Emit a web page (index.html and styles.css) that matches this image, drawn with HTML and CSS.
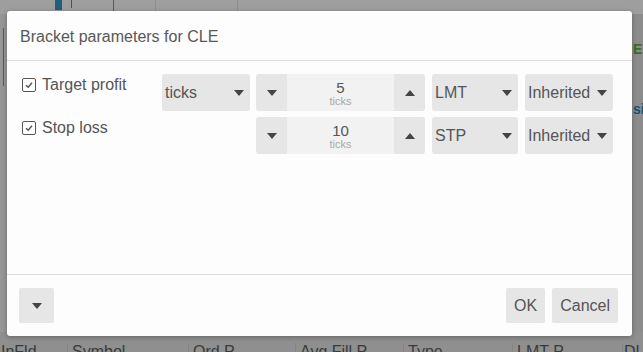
FILE: index.html
```html
<!DOCTYPE html>
<html>
<head>
<meta charset="utf-8">
<link rel="stylesheet" href="styles.css">
</head>
<body>
<div class="app">
  <div class="topstrip">
    <span class="candle"></span><span class="wick"></span><span class="vline blue"></span><span class="vline g1"></span><span class="vline g2"></span>
  </div>
  <div class="middle">
    <div class="leftside"><span class="lline"></span></div>
    <div class="center"></div>
    <div class="rightside"><span class="e">E</span><span class="si">si</span></div>
  </div>
  <div class="colheads">
    <span class="ch w72">InFld</span><span class="ch w121">Symbol</span><span class="ch w107">Ord P</span><span class="ch w108">Avg Fill P</span><span class="ch w109">Type</span><span class="ch w110">LMT P</span><span class="ch">DL</span>
  </div>
</div>

<div class="modal">
  <div class="mhead">Bracket parameters for CLE</div>
  <div class="mbody">
    <div class="grid">
      <label class="chk"><span class="box"><svg viewBox="0 0 10 10" width="10" height="10"><path d="M2 5.2 L4.2 7.3 L8 2.8" fill="none" stroke="#555" stroke-width="1.4"/></svg></span>Target profit</label>
      <div class="sel"><span>ticks</span><svg class="arr" viewBox="0 0 10 6" width="10" height="6"><path d="M0 0 H10 L5 6 Z" fill="#444"/></svg></div>
      <div class="spin">
        <div class="sbtn"><svg viewBox="0 0 10 6" width="10" height="6"><path d="M0 0 H10 L5 6 Z" fill="#444"/></svg></div>
        <div class="sval"><span class="num">5</span><span class="unit">ticks</span></div>
        <div class="sbtn"><svg viewBox="0 0 10 6" width="10" height="6"><path d="M0 6 H10 L5 0 Z" fill="#444"/></svg></div>
      </div>
      <div class="sel otype"><span>LMT</span><svg class="arr" viewBox="0 0 10 6" width="10" height="6"><path d="M0 0 H10 L5 6 Z" fill="#444"/></svg></div>
      <div class="sel"><span>Inherited</span><svg class="arr" viewBox="0 0 10 6" width="10" height="6"><path d="M0 0 H10 L5 6 Z" fill="#444"/></svg></div>

      <label class="chk"><span class="box"><svg viewBox="0 0 10 10" width="10" height="10"><path d="M2 5.2 L4.2 7.3 L8 2.8" fill="none" stroke="#555" stroke-width="1.4"/></svg></span>Stop loss</label>
      <div></div>
      <div class="spin">
        <div class="sbtn"><svg viewBox="0 0 10 6" width="10" height="6"><path d="M0 0 H10 L5 6 Z" fill="#444"/></svg></div>
        <div class="sval"><span class="num">10</span><span class="unit">ticks</span></div>
        <div class="sbtn"><svg viewBox="0 0 10 6" width="10" height="6"><path d="M0 6 H10 L5 0 Z" fill="#444"/></svg></div>
      </div>
      <div class="sel otype"><span>STP</span><svg class="arr" viewBox="0 0 10 6" width="10" height="6"><path d="M0 0 H10 L5 6 Z" fill="#444"/></svg></div>
      <div class="sel"><span>Inherited</span><svg class="arr" viewBox="0 0 10 6" width="10" height="6"><path d="M0 0 H10 L5 6 Z" fill="#444"/></svg></div>
    </div>
  </div>
  <div class="mfoot">
    <div class="fbtn"><svg viewBox="0 0 10 6" width="10" height="6"><path d="M0 0 H10 L5 6 Z" fill="#444"/></svg></div>
    <div class="spacer"></div>
    <div class="btn">OK</div>
    <div class="btn">Cancel</div>
  </div>
</div>
</body>
</html>
```
FILE: styles.css
```css
* { box-sizing: border-box; }
html, body { margin: 0; padding: 0; }
body {
  width: 643px;
  height: 352px;
  overflow: hidden;
  position: relative;
  font-family: "Liberation Sans", Arial, sans-serif;
  background: #9a9a9a;
}
.app {
  width: 643px;
  height: 352px;
  display: flex;
  flex-direction: column;
}
.topstrip {
  height: 14px;
  position: relative;
  background: #9e9e9e;
  display: flex;
}
.candle { position: absolute; left: 55px; top: 0; width: 7px; height: 10px; background: #1f5f80; }
.wick { position: absolute; left: 71px; top: 0; width: 1px; height: 8px; background: #1f5f80; }
.vline { position: absolute; top: 0; width: 1px; height: 14px; }
.vline.blue { left: 113px; background: #2a6a8a; }
.vline.g1 { left: 155px; background: #8e8e8e; }
.vline.g2 { left: 237px; background: #8e8e8e; }
.middle { flex: 1; display: flex; }
.leftside { width: 7px; background: #969696; position: relative; }
.lline { position: absolute; left: 3px; top: 14px; width: 1px; height: 58px; background: #2a6a8a; }
.center { flex: 1; }
.rightside {
  width: 11px;
  margin-left: auto;
  background: #8c8c8c;
  display: flex;
  flex-direction: column;
  font-weight: bold;
  font-size: 14px;
  padding-left: 1px;
  overflow: hidden;
}
.e { color: #3f6a2a; margin-top: 27px; }
.si { color: #1a4f6a; margin-top: 44px; }
.colheads {
  height: 20px;
  background: #8f8f8f;
  display: flex;
  align-items: flex-start;
  font-size: 16px;
  color: #3a3a3a;
  padding-top: 11px;
  overflow: hidden;
}
.ch { flex: none; padding-left: 1px; border-right: 1px solid #848484; height: 30px; }
.w72 { width: 68px; }
.w121 { width: 121px; padding-left: 4px; }
.w107 { width: 107px; padding-left: 4px; }
.w108 { width: 108px; padding-left: 4px; }
.w109 { width: 109px; padding-left: 4px; }
.w110 { width: 110px; padding-left: 4px; }

.modal {
  position: absolute;
  left: 7px;
  top: 11px;
  width: 625px;
  height: 325px;
  background: #fdfdfd;
  border-radius: 3px;
  box-shadow: 0 1px 5px rgba(0,0,0,0.3);
  display: flex;
  flex-direction: column;
  color: #555;
}
.mhead {
  height: 50px;
  border-bottom: 1px solid #dcdcdc;
  font-size: 16px;
  padding: 17px 0 0 13px;
  color: #585858;
}
.mbody {
  flex: 1;
  padding: 13px 0 0 15px;
}
.grid {
  display: grid;
  grid-template-columns: 134px 88px 170px 87px 88px;
  column-gap: 6px;
  row-gap: 6px;
  grid-auto-rows: 37px;
}
.chk {
  display: flex;
  align-items: flex-start;
  font-size: 16px;
  color: #555;
  padding-top: 2px;
}
.box {
  width: 14px;
  height: 14px;
  border: 1.5px solid #555;
  border-radius: 2px;
  margin-top: 2px;
  margin-right: 6px;
  display: flex;
  align-items: center;
  justify-content: center;
  background: #fff;
}
.sel {
  background: #e6e6e6;
  border-radius: 3px;
  display: flex;
  align-items: center;
  padding: 0 6px 0 3px;
  font-size: 16px;
  color: #555;
}
.sel.otype { margin-right: 1px; }
.sel span { flex: 1; }
.sel .arr { flex: none; }
.spin { display: flex; margin-right: 1px; }
.sbtn {
  width: 31px;
  background: #e6e6e6;
  display: flex;
  align-items: center;
  justify-content: center;
}
.spin .sbtn:first-child { border-radius: 3px 0 0 3px; }
.spin .sbtn:last-child { border-radius: 0 3px 3px 0; }
.sval {
  flex: 1;
  background: #f2f2f2;
  display: flex;
  flex-direction: column;
  align-items: center;
  justify-content: center;
  line-height: 1;
}
.num { font-size: 15px; color: #555; margin-top: 2px; }
.unit { font-size: 11px; color: #a8a8a8; margin-top: 1px; }
.mfoot {
  height: 62px;
  border-top: 1px solid #dcdcdc;
  display: flex;
  align-items: flex-start;
  padding: 13px 14px 0 12px;
  gap: 7px;
}
.spacer { flex: 1; }
.fbtn {
  width: 35px;
  height: 35px;
  background: #e6e6e6;
  border-radius: 2px;
  display: flex;
  align-items: center;
  justify-content: center;
}
.btn {
  height: 35px;
  background: #e6e6e6;
  border-radius: 2px;
  display: flex;
  align-items: center;
  justify-content: center;
  font-size: 16px;
  color: #555;
  padding: 0 8px;
}
```
